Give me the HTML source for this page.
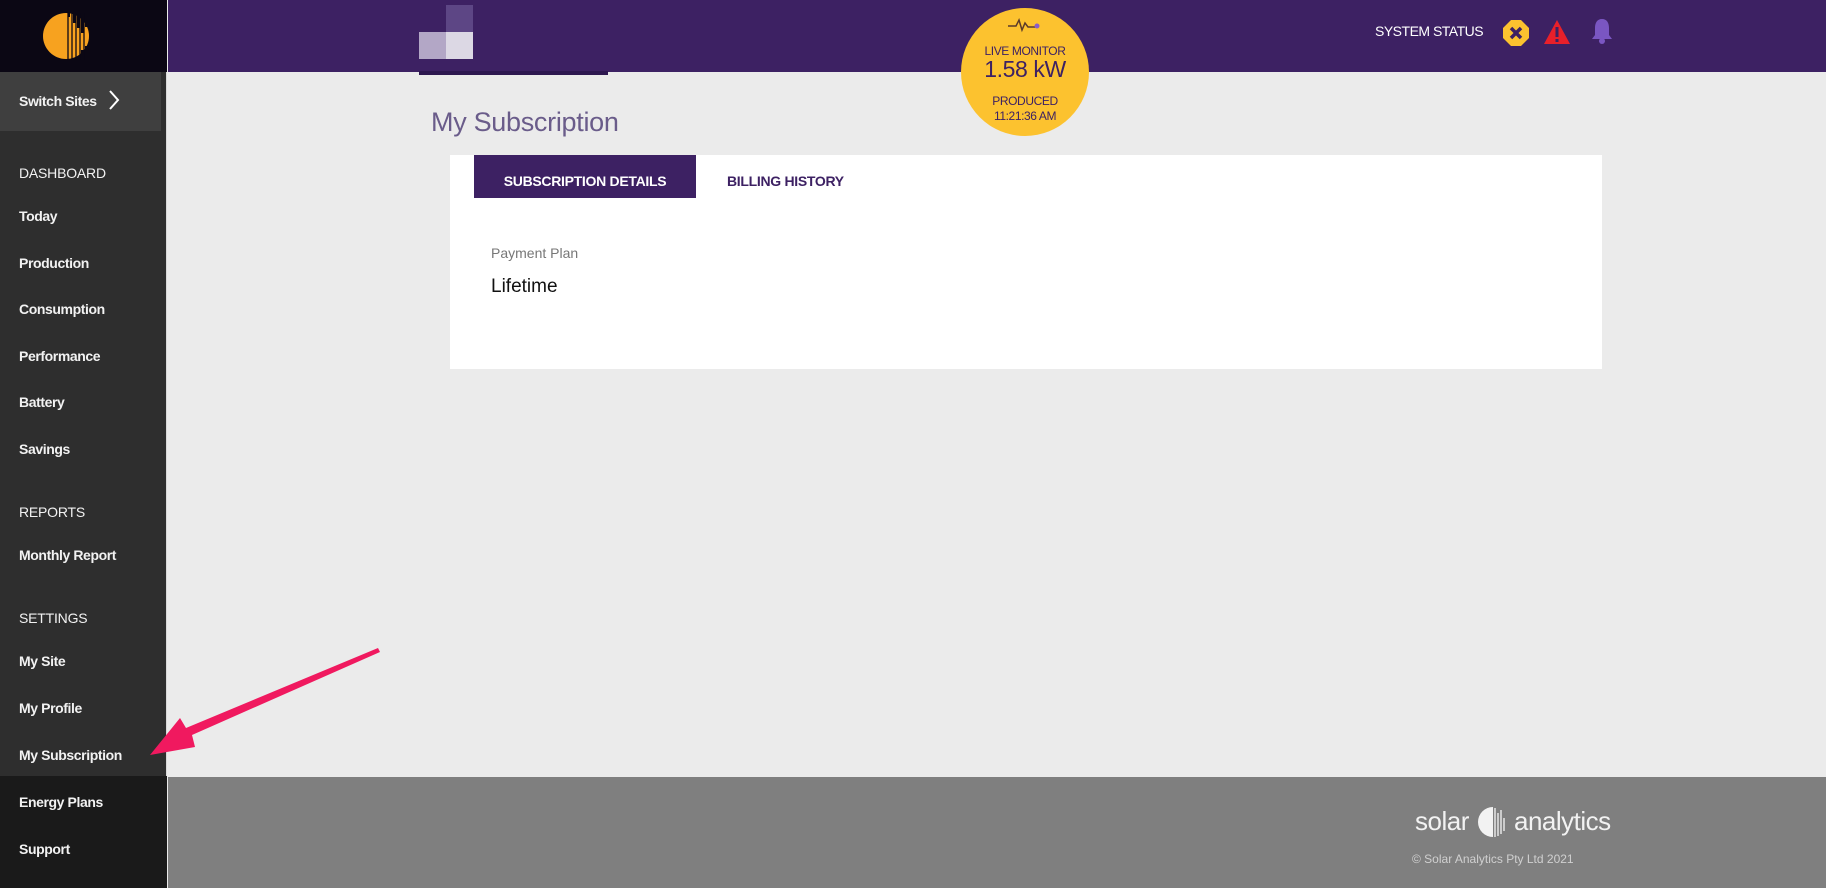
<!DOCTYPE html>
<html><head><meta charset="utf-8">
<style>
*{margin:0;padding:0;box-sizing:border-box}
body{width:1826px;height:888px;overflow:hidden;background:#ebebeb;font-family:"Liberation Sans",Arial,sans-serif;position:relative}
.abs{position:absolute}
#side{left:0;top:0;width:167px;height:888px;background:#2e2e2e;border-right:1px solid #d8d8d8}
.nav{position:absolute;left:19px;color:#f2f2f2;font-size:14px;font-weight:bold;line-height:16px;white-space:nowrap;letter-spacing:-0.4px}
.sec{position:absolute;left:19px;color:#f2f2f2;font-size:14px;line-height:16px;letter-spacing:-0.2px}
</style></head><body>
<div id="side" class="abs">
  <div class="abs" style="left:0;top:0;width:167px;height:72px;background:#0b0714"></div>
  <svg class="abs" style="left:40px;top:10px" width="52" height="52" viewBox="0 0 52 52">
    <path d="M26 3 A23 23 0 0 0 26 49 Z" fill="#f7a21f"/>
    <path d="M26 3 A23 23 0 0 1 26 49 Z" fill="#f7a21f"/>
    <g stroke="#0b0714" stroke-width="1.3">
      <line x1="28" y1="3" x2="28" y2="50"/><line x1="32" y1="3" x2="32" y2="50"/><line x1="36" y1="3" x2="36" y2="50"/><line x1="40" y1="3" x2="40" y2="50"/><line x1="44" y1="3" x2="44" y2="50"/>
    </g>
    <g fill="#0b0714">
      <rect x="28" y="3" width="2" height="4"/><rect x="33" y="3" width="3" height="10"/><rect x="37" y="3" width="3" height="15"/><rect x="41" y="3" width="3" height="20"/><rect x="45" y="3" width="5" height="14"/><rect x="45" y="36" width="5" height="14"/><rect x="41" y="40" width="3" height="10"/>
    </g>
  </svg>
  <div class="abs" style="left:0;top:72px;width:161px;height:59px;background:#3f3f3f"></div>
  <div class="nav" style="top:93px;font-size:14px">Switch Sites</div>
  <svg class="abs" style="left:107px;top:89px" width="14" height="22" viewBox="0 0 14 22"><path d="M3 2 L11 11 L3 20" stroke="#fff" stroke-width="2" fill="none"/></svg>
  <div class="abs" style="left:0;top:776px;width:167px;height:112px;background:#1a1a1a"></div>
  <div class="sec" style="top:165px">DASHBOARD</div>
  <div class="nav" style="top:208px">Today</div>
  <div class="nav" style="top:255px">Production</div>
  <div class="nav" style="top:301px">Consumption</div>
  <div class="nav" style="top:348px">Performance</div>
  <div class="nav" style="top:394px">Battery</div>
  <div class="nav" style="top:441px">Savings</div>
  <div class="sec" style="top:504px">REPORTS</div>
  <div class="nav" style="top:547px">Monthly Report</div>
  <div class="sec" style="top:610px">SETTINGS</div>
  <div class="nav" style="top:653px">My Site</div>
  <div class="nav" style="top:700px">My Profile</div>
  <div class="nav" style="top:747px">My Subscription</div>
  <div class="nav" style="top:794px">Energy Plans</div>
  <div class="nav" style="top:841px">Support</div>
</div>
<div class="abs" style="left:168px;top:0;width:1658px;height:72px;background:#3d2163"></div>
<div class="abs" style="left:419px;top:71px;width:189px;height:4px;background:#2e1850"></div>
<div class="abs" style="left:446px;top:5px;width:27px;height:27px;background:#5d4685"></div>
<div class="abs" style="left:419px;top:32px;width:27px;height:27px;background:#b3a7c6"></div>
<div class="abs" style="left:446px;top:32px;width:27px;height:27px;background:#dcd8e4"></div>
<div class="abs" style="left:961px;top:8px;width:128px;height:128px;border-radius:50%;background:#fcc22f;text-align:center;color:#3d2163;letter-spacing:-0.4px">
  <svg style="position:absolute;left:45px;top:9px" width="38" height="16" viewBox="0 0 38 16"><path d="M2 9 H10 L13 3 L16 13 L19 6 L22 10 H30" stroke="#5a3a2a" stroke-width="1.5" fill="none"/><circle cx="31" cy="9" r="2.5" fill="#8a5cc8"/></svg>
  <div style="position:absolute;top:36px;width:100%;font-size:12px">LIVE MONITOR</div>
  <div style="position:absolute;top:48px;width:100%;font-size:23px">1.58 kW</div>
  <div style="position:absolute;top:86px;width:100%;font-size:12px">PRODUCED</div>
  <div style="position:absolute;top:101px;width:100%;font-size:12px">11:21:36 AM</div>
</div>
<div class="abs" style="left:1375px;top:23px;color:#fff;font-size:14px;letter-spacing:-0.5px">SYSTEM STATUS</div>
<svg class="abs" style="left:1502px;top:19px" width="28" height="28" viewBox="0 0 28 28"><polygon points="9,1 19,1 27,9 27,19 19,27 9,27 1,19 1,9" fill="#fcc22f"/><path d="M9 9 L19 19 M19 9 L9 19" stroke="#3d2163" stroke-width="3.5"/></svg>
<svg class="abs" style="left:1543px;top:19px" width="28" height="26" viewBox="0 0 28 26"><polygon points="14,1 27,25 1,25" fill="#e8202a"/><rect x="12.5" y="8" width="3" height="10" fill="#3d2163"/><rect x="12.5" y="20" width="3" height="3" fill="#3d2163"/></svg>
<svg class="abs" style="left:1590px;top:17px" width="24" height="28" viewBox="0 0 24 28"><path d="M12 2 C7 2 5 6 5 11 V18 L2 22 H22 L19 18 V11 C19 6 17 2 12 2 Z" fill="#7a56c2"/><circle cx="12" cy="24" r="3" fill="#7a56c2"/></svg>
<div class="abs" style="left:431px;top:107px;font-size:27px;color:#6a5c8a;letter-spacing:-0.3px">My Subscription</div>
<div class="abs" style="left:450px;top:155px;width:1152px;height:214px;background:#fff"></div>
<div class="abs" style="left:474px;top:155px;width:222px;height:43px;background:#3d2163;color:#fff;font-size:14px;font-weight:bold;text-align:center;line-height:52px;letter-spacing:-0.3px">SUBSCRIPTION DETAILS</div>
<div class="abs" style="left:727px;top:155px;height:43px;color:#3d2163;font-size:14px;font-weight:bold;line-height:52px;letter-spacing:-0.3px">BILLING HISTORY</div>
<div class="abs" style="left:491px;top:245px;color:#777;font-size:14px">Payment Plan</div>
<div class="abs" style="left:491px;top:276px;color:#111;font-size:19px">Lifetime</div>
<div class="abs" style="left:168px;top:777px;width:1658px;height:111px;background:#7f7f7f"></div>
<div class="abs" style="left:1415px;top:806px;color:#f2f2f2;font-size:26px;white-space:nowrap;letter-spacing:-0.5px">solar</div>
<svg class="abs" style="left:1478px;top:806px" width="30" height="32" viewBox="0 0 30 32"><path d="M15 1 A15 15 0 0 0 15 31 Z" fill="#f2f2f2"/><g stroke="#e6e6e6" stroke-width="1.5"><line x1="17" y1="2" x2="17" y2="31"/><line x1="20" y1="7" x2="20" y2="30"/><line x1="23" y1="4" x2="23" y2="28"/><line x1="26" y1="12" x2="26" y2="25"/></g></svg>
<div class="abs" style="left:1514px;top:806px;color:#f2f2f2;font-size:26px;white-space:nowrap;letter-spacing:-0.5px">analytics</div>
<div class="abs" style="left:1412px;top:852px;color:#d0d0d0;font-size:12px">© Solar Analytics Pty Ltd 2021</div>
<svg class="abs" style="left:140px;top:640px" width="250" height="130" viewBox="0 0 250 130">
  <polygon points="238,8 240,12 52,95 55,107 10,115 40,78 46,88" fill="#f0195f"/>
</svg>
</body></html>
